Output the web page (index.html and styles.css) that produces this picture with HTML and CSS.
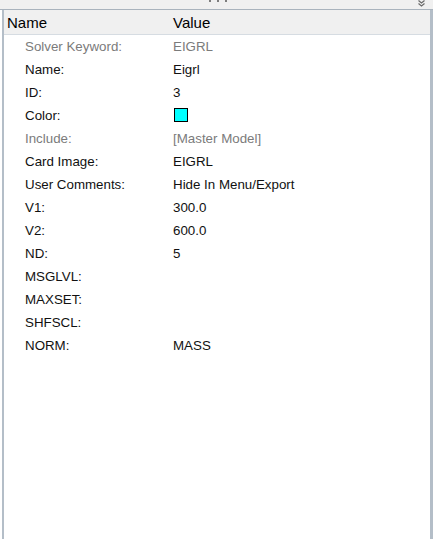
FILE: index.html
```html
<!DOCTYPE html>
<html>
<head>
<meta charset="utf-8">
<link rel="stylesheet" href="styles.css">
</head>
<body>
<div class="topbar">
  <div class="grip"><span></span><span></span><span></span></div>
  <svg class="collapse" width="7" height="7" viewBox="0 0 7 7"><path d="M0.5 0.5 L3.5 3 L6.5 0.5 M0.5 3.5 L3.5 6 L6.5 3.5" fill="none" stroke="#6a6a6a" stroke-width="1.2"/></svg>
</div>
<div class="panel">
  <div class="header">
    <div class="hcell name">Name</div>
    <div class="hcell">Value</div>
  </div>
  <div class="rows">
    <div class="row dim"><div class="key">Solver Keyword:</div><div class="val">EIGRL</div></div>
    <div class="row"><div class="key">Name:</div><div class="val">Eigrl</div></div>
    <div class="row"><div class="key">ID:</div><div class="val">3</div></div>
    <div class="row"><div class="key">Color:</div><div class="val"><span class="swatch"></span></div></div>
    <div class="row dim"><div class="key">Include:</div><div class="val">[Master Model]</div></div>
    <div class="row"><div class="key">Card Image:</div><div class="val">EIGRL</div></div>
    <div class="row"><div class="key">User Comments:</div><div class="val">Hide In Menu/Export</div></div>
    <div class="row"><div class="key">V1:</div><div class="val">300.0</div></div>
    <div class="row"><div class="key">V2:</div><div class="val">600.0</div></div>
    <div class="row"><div class="key">ND:</div><div class="val">5</div></div>
    <div class="row"><div class="key">MSGLVL:</div><div class="val"></div></div>
    <div class="row"><div class="key">MAXSET:</div><div class="val"></div></div>
    <div class="row"><div class="key">SHFSCL:</div><div class="val"></div></div>
    <div class="row"><div class="key">NORM:</div><div class="val">MASS</div></div>
  </div>
</div>
</body>
</html>
```
FILE: styles.css
```css
html, body {
  margin: 0;
  padding: 0;
  height: 100%;
  background: #ffffff;
  font-family: "Liberation Sans", Arial, sans-serif;
  overflow: hidden;
}
body {
  display: flex;
  flex-direction: column;
}
.topbar {
  height: 9px;
  background: #f0f0f0;
  border-bottom: 1px solid #a9b3bd;
  display: flex;
  position: relative;
  flex: none;
}
.grip {
  display: flex;
  gap: 6px;
  margin-left: 209px;
  height: 2px;
}
.grip span {
  width: 2px;
  height: 2px;
  background: #7d7d7d;
}
.collapse {
  margin-left: auto;
  margin-right: 8px;
  margin-top: 0;
}
.panel {
  flex: 1;
  margin-left: 2px;
  border-left: 2px solid #b4bec8;
  border-right: 3px solid #b4bec8;
  background: #ffffff;
  display: flex;
  flex-direction: column;
}
.header {
  height: 24px;
  background: #f0f0f0;
  border-bottom: 1px solid #d6dce2;
  display: grid;
  grid-template-columns: 169px 1fr;
  font-size: 15px;
  color: #000000;
  line-height: 26px;
  flex: none;
}
.hcell.name {
  padding-left: 3px;
}
.row {
  display: grid;
  grid-template-columns: 169px 1fr;
  height: 23px;
  line-height: 23px;
  font-size: 13.33px;
  color: #111111;
}
.row .key {
  padding-left: 21px;
}
.row.dim {
  color: #7b7b7b;
}
.swatch {
  display: inline-block;
  width: 12px;
  height: 12px;
  background: #00ffff;
  border: 1px solid #000000;
  vertical-align: -2px;
  margin-left: 1px;
}
```
